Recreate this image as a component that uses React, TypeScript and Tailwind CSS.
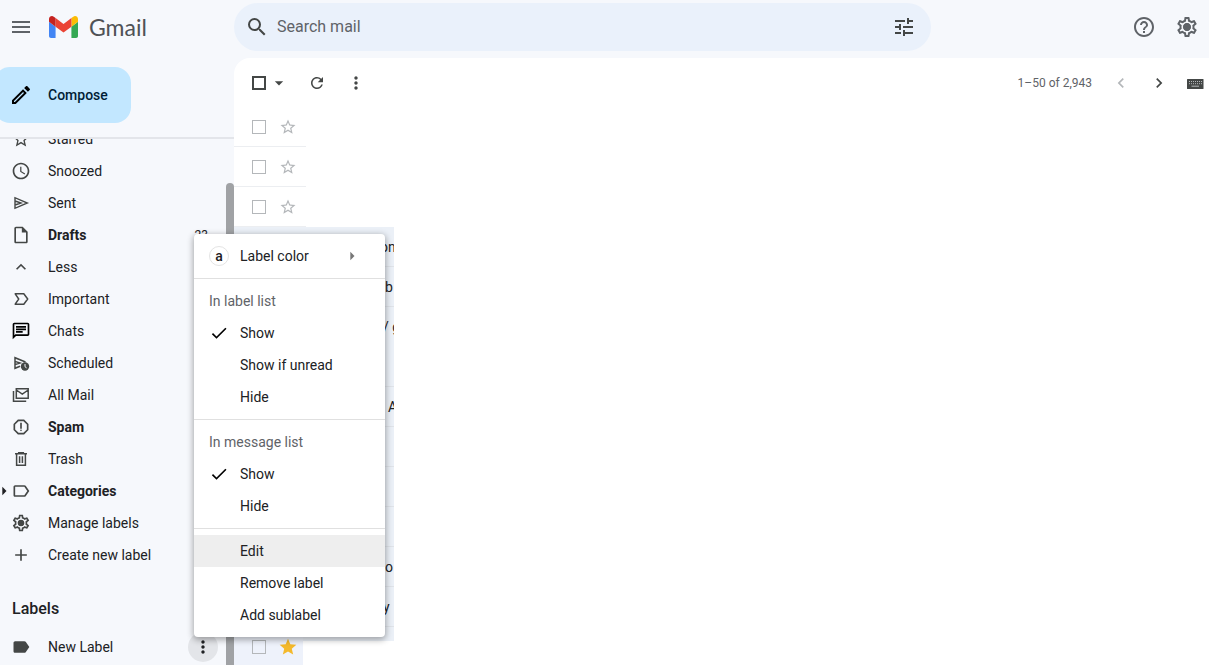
import { useState } from 'react';
import type { ReactNode } from 'react';
import {
  MdAccessTime, MdAdd, MdArrowDropDown, MdArrowRight, MdCheck, MdChevronLeft, MdChevronRight,
  MdExpandLess, MdHelpOutline, MdLabel, MdMenu, MdMoreVert, MdOutlineChat,
  MdOutlineCreate, MdOutlineInsertDriveFile, MdOutlineLabel,
  MdOutlineReport, MdOutlineSettings, MdRefresh, MdSearch, MdStar, MdStarBorder, MdTune,
} from 'react-icons/md';

function GmailLogo() {
  return (
    <svg viewBox="52 42 88 66" className="w-[29px] h-[22px]" aria-hidden="true">
      <path fill="#4285f4" d="M58 108h14V74L52 59v43c0 3.32 2.69 6 6 6" />
      <path fill="#34a853" d="M120 108h14c3.32 0 6-2.69 6-6V59l-20 15" />
      <path fill="#fbbc04" d="M120 48v26l20-15v-8c0-7.42-8.47-11.65-14.4-7.2" />
      <path fill="#ea4335" d="M72 74V48l24 18 24-18v26L96 92" />
      <path fill="#c5221f" d="M52 51v8l20 15V48l-5.6-4.2c-5.94-4.45-14.4-.22-14.4 7.2" />
    </svg>
  );
}

function SendIcon() {
  return (
    <svg viewBox="0 0 20 20" className="w-5 h-5" fill="none" stroke="currentColor" strokeWidth="1.4" aria-hidden="true">
      <path d="M4 4.7v10.6L16.3 10 4 4.7zM4 8l6 2-6 2" />
    </svg>
  );
}

function ScheduledIcon() {
  return (
    <svg viewBox="0 0 20 20" className="w-5 h-5" fill="none" stroke="currentColor" strokeWidth="1.5" aria-hidden="true">
      <path d="M9 13.2 4 15.3V4.7L14.5 9M4 8.4l5 1.6-5 1.6" />
      <circle cx="14" cy="13.5" r="4.2" fill="currentColor" stroke="none" />
      <path d="M14 11v2.7l1.6 1.2" stroke="#f6f8fc" strokeWidth="1" />
    </svg>
  );
}

function AllMailIcon() {
  return (
    <svg viewBox="0 0 20 20" className="w-5 h-5" fill="none" stroke="currentColor" strokeWidth="1.5" aria-hidden="true">
      <path d="M5.3 3.8h11.9v9.4H5.3zM5.3 5l6 4 5.9-4M2.5 6v10.2h12.7" />
    </svg>
  );
}

function ImportantIcon() {
  return (
    <svg viewBox="0 0 20 20" className="w-5 h-5" fill="none" stroke="currentColor" strokeWidth="1.5" strokeLinejoin="round" aria-hidden="true">
      <path d="M4.2 4.8h8.6l3.9 5.2-3.9 5.2H4.2L7.7 10z" />
    </svg>
  );
}

function TrashIcon() {
  return (
    <svg viewBox="0 0 20 20" className="w-5 h-5" fill="none" stroke="currentColor" strokeWidth="1.5" aria-hidden="true">
      <path d="M4 4.8h12M7.7 4.5V3.7h4.6v.8M5.6 5v11.3h8.8V5M8.6 7.3v6.6M11.4 7.3v6.6" />
    </svg>
  );
}

// outlined gear with a solid hub
function GearIcon({ className }: { className: string }) {
  return (
    <svg viewBox="0 0 24 24" className={className} fill="currentColor" aria-hidden="true">
      <MdOutlineSettings size={24} />
      <circle cx="12" cy="12" r="3.7" />
    </svg>
  );
}

function KeyboardIcon() {
  return (
    <svg viewBox="0 0 20 20" className="w-5 h-5" aria-hidden="true">
      <rect x="2" y="6" width="16.5" height="10" rx="0.5" fill="#444746" />
      <path d="M4 8.5h13M4 10.7h13" stroke="#b4b7ba" strokeWidth="1" strokeDasharray="1 1" />
      <path d="M6.5 13.2h7.5" stroke="#b4b7ba" strokeWidth="1" />
    </svg>
  );
}

type NavItem = { label: string; icon: ReactNode; bold?: boolean; count?: string; expandable?: boolean };

const NAV: NavItem[] = [
  { label: 'Starred', icon: <MdStarBorder /> },
  { label: 'Snoozed', icon: <MdAccessTime /> },
  { label: 'Sent', icon: <SendIcon /> },
  { label: 'Drafts', icon: <MdOutlineInsertDriveFile />, bold: true, count: '23' },
  { label: 'Less', icon: <MdExpandLess /> },
  { label: 'Important', icon: <ImportantIcon /> },
  { label: 'Chats', icon: <MdOutlineChat className="text-black" /> },
  { label: 'Scheduled', icon: <ScheduledIcon /> },
  { label: 'All Mail', icon: <AllMailIcon /> },
  { label: 'Spam', icon: <MdOutlineReport />, bold: true },
  { label: 'Trash', icon: <TrashIcon /> },
  { label: 'Categories', icon: <MdOutlineLabel />, bold: true, expandable: true },
  { label: 'Manage labels', icon: <GearIcon className="w-5 h-5" /> },
  { label: 'Create new label', icon: <MdAdd /> },
];

// read rows, only the tail of each subject is visible next to the menu
const READ_ROWS = [
  { tail: 'on', className: 'h-10 pl-[146px]' },
  { tail: 'b', className: 'h-10 pl-[151px]' },
  { tail: '/ g', className: 'h-20 pl-[149px]' },
  { tail: 'A', className: 'h-10 pl-[154px]' },
  { tail: '', className: 'h-10' },
  { tail: '', className: 'h-10' },
  { tail: '', className: 'h-10' },
  { tail: 'o', className: 'h-10 pl-[151px]' },
  { tail: 'y', className: 'h-10 pl-[149px]' },
];

function NavRow({ item }: { item: NavItem }) {
  return (
    <a href="#" className="relative flex h-8 shrink-0 items-center pl-[11px] pr-[18px]">
      {item.expandable && <MdArrowRight className="absolute -left-1.5 w-5 h-5" />}
      <span className="flex w-[37px] text-xl text-[#444746]">{item.icon}</span>
      <span className={item.bold ? 'flex-1 font-bold' : 'flex-1'}>{item.label}</span>
      {item.count && <span className="text-xs">{item.count}</span>}
    </a>
  );
}

function MenuItem({ children, checked, active }: { children: ReactNode; checked?: boolean; active?: boolean }) {
  return (
    <button role="menuitem" className={`flex h-8 w-full items-center pl-[15px] text-left ${active ? 'bg-[#eeeeee]' : ''}`}>
      <span className="w-[31px]">{checked && <MdCheck className="w-5 h-5 text-black" />}</span>
      {children}
    </button>
  );
}

function Divider() {
  return <div className="my-1.5 h-px bg-[#e0e0e0]" />;
}

function LabelMenu() {
  return (
    <div role="menu" className="absolute left-[194px] top-[234px] z-10 w-[191px] rounded bg-white py-1.5 shadow-[0_2px_6px_1px_rgba(0,0,0,0.32)]">
      <button role="menuitem" className="flex h-8 w-full items-center pl-[15px] pr-[23px] text-left">
        <span className="flex h-5 w-5 items-center justify-center rounded-full border border-[#e4e4e4] font-medium">a</span>
        <span className="ml-[11px] flex-1">Label color</span>
        <MdArrowRight className="w-5 h-5 text-[#777777]" />
      </button>
      <Divider />
      <div className="flex h-8 items-center pl-[15px] text-[#5f6368]">In label list</div>
      <MenuItem checked>Show</MenuItem>
      <MenuItem>Show if unread</MenuItem>
      <MenuItem>Hide</MenuItem>
      <Divider />
      <div className="flex h-8 items-center pl-[15px] text-[#5f6368]">In message list</div>
      <MenuItem checked>Show</MenuItem>
      <MenuItem>Hide</MenuItem>
      <Divider />
      <MenuItem active>Edit</MenuItem>
      <MenuItem>Remove label</MenuItem>
      <MenuItem>Add sublabel</MenuItem>
    </div>
  );
}

function RowControls({ starred = false }: { starred?: boolean }) {
  return (
    <>
      <input type="checkbox" aria-label="Select message" className="h-3.5 w-3.5 appearance-none border border-[#b4b7ba]" />
      <button aria-label="Star message" className="ml-3">
        {starred ? <MdStar className="w-5 h-5 text-[#f4b92b]" /> : <MdStarBorder className="w-5 h-5 p-px text-[#b4b7ba]" />}
      </button>
    </>
  );
}

export default function App() {
  const [query, setQuery] = useState('');

  return (
    <div className="relative flex h-screen flex-col overflow-hidden bg-[#f6f8fc] font-['Roboto',sans-serif] text-sm text-[#202124]">
      <header className="flex h-[58px] shrink-0 items-start pr-2.5 pt-[3px]">
        <div className="flex h-12 w-[234px] shrink-0 items-center pl-[9px]">
          <button aria-label="Main menu"><MdMenu className="w-6 h-6 text-[#5f6368]" /></button>
          <a href="#" className="ml-4 flex items-center gap-[11px]">
            <GmailLogo />
            <span className="font-['Lato',sans-serif] text-[23px] text-[#4f5256]">Gmail</span>
          </a>
        </div>
        <form className="flex h-12 w-[697px] min-w-0 items-center rounded-full bg-[#eaf1fb] pl-[11px] pr-[15px] text-[#444746]" onSubmit={(e) => e.preventDefault()}>
          <button aria-label="Search"><MdSearch className="w-6 h-6" /></button>
          <input
            value={query}
            onChange={(e) => setQuery(e.target.value)}
            placeholder="Search mail"
            aria-label="Search mail"
            className="ml-2 min-w-0 flex-1 bg-transparent text-base outline-none placeholder:text-[#5f6368]"
          />
          <button type="button" aria-label="Search options"><MdTune className="w-6 h-6" /></button>
        </form>
        <div className="ml-auto flex h-12 items-center gap-[19px] text-[#5f6368]">
          <button aria-label="Support"><MdHelpOutline className="w-6 h-6" /></button>
          <button aria-label="Settings"><GearIcon className="w-6 h-6" /></button>
        </div>
      </header>

      <div className="flex min-h-0 flex-1">
        <aside className="flex w-[234px] shrink-0 flex-col">
          <div className="border-b-2 border-[#e3e5ea] pb-[14px] pt-[9px]">
            <button className="-ml-1.5 flex h-14 items-center rounded-2xl bg-[#c2e7ff] pl-[15px] pr-[23px] font-medium text-[#001d35]">
              <MdOutlineCreate className="w-6 h-6 text-black" />
              <span className="ml-[15px]">Compose</span>
            </button>
          </div>
          <div className="flex min-h-0 flex-1">
            <div className="flex min-w-0 flex-1 flex-col overflow-hidden">
              <nav className="-mt-4 flex flex-col">
                {NAV.map((item) => <NavRow key={item.label} item={item} />)}
              </nav>
              <h2 className="mb-2.5 mt-[26px] pl-3 text-base font-medium leading-6">Labels</h2>
              <div className="flex h-8 shrink-0 items-center pl-[11px]">
                <MdLabel className="w-5 h-5 text-[#444746]" />
                <a href="#" className="ml-[17px] flex-1">New Label</a>
                <button aria-label="New Label options" className="mr-2 flex h-[30px] w-[30px] items-center justify-center rounded-full bg-[#e3e5e9]">
                  <MdMoreVert className="w-5 h-5" />
                </button>
              </div>
            </div>
            {/* scrollbar thumb */}
            <div className="mt-11 w-2 rounded-t bg-[#a0a2a5]" />
          </div>
        </aside>

        <main className="flex min-w-0 flex-1 flex-col rounded-tl-2xl bg-white">
          <div className="flex h-[49px] shrink-0 items-center pl-[18px] pr-1 text-[#444746]">
            <input type="checkbox" aria-label="Select all" className="h-3.5 w-3.5 appearance-none border-2 border-[#444746]" />
            <button aria-label="Select options" className="ml-[3px]"><MdArrowDropDown className="w-5 h-5" /></button>
            <button aria-label="Refresh" className="ml-[19px]"><MdRefresh className="w-[18px] h-[18px]" /></button>
            <button aria-label="More" className="ml-5"><MdMoreVert className="w-5 h-5" /></button>
            <span className="ml-auto text-xs text-[#5f6368]">1–50 of 2,943</span>
            <button aria-label="Newer" disabled className="ml-[19px] text-[#b4b7ba]"><MdChevronLeft className="w-5 h-5" /></button>
            <button aria-label="Older" className="ml-[18px]"><MdChevronRight className="w-5 h-5" /></button>
            <button aria-label="Input tools" className="ml-4"><KeyboardIcon /></button>
          </div>

          {[0, 1, 2].map((i) => (
            <div key={i} className="flex h-10 w-[72px] shrink-0 items-center border-b border-[#eceef1] pl-[18px]">
              <RowControls />
            </div>
          ))}
          {READ_ROWS.map((row, i) => (
            <div key={i} className={`w-40 shrink-0 overflow-hidden border-b border-[#dfe3e9] bg-[#ebf0f7] leading-10 whitespace-nowrap ${row.className}`}>
              {row.tail}
            </div>
          ))}
          <div className="flex shrink-0 items-start">
            <div className="flex h-10 w-[69px] items-center bg-[#eef2fb] pl-[18px]">
              <RowControls starred />
            </div>
            <div className="h-3.5 w-[91px] bg-[#ebf0f7]" />
          </div>
        </main>
      </div>

      <LabelMenu />
    </div>
  );
}
